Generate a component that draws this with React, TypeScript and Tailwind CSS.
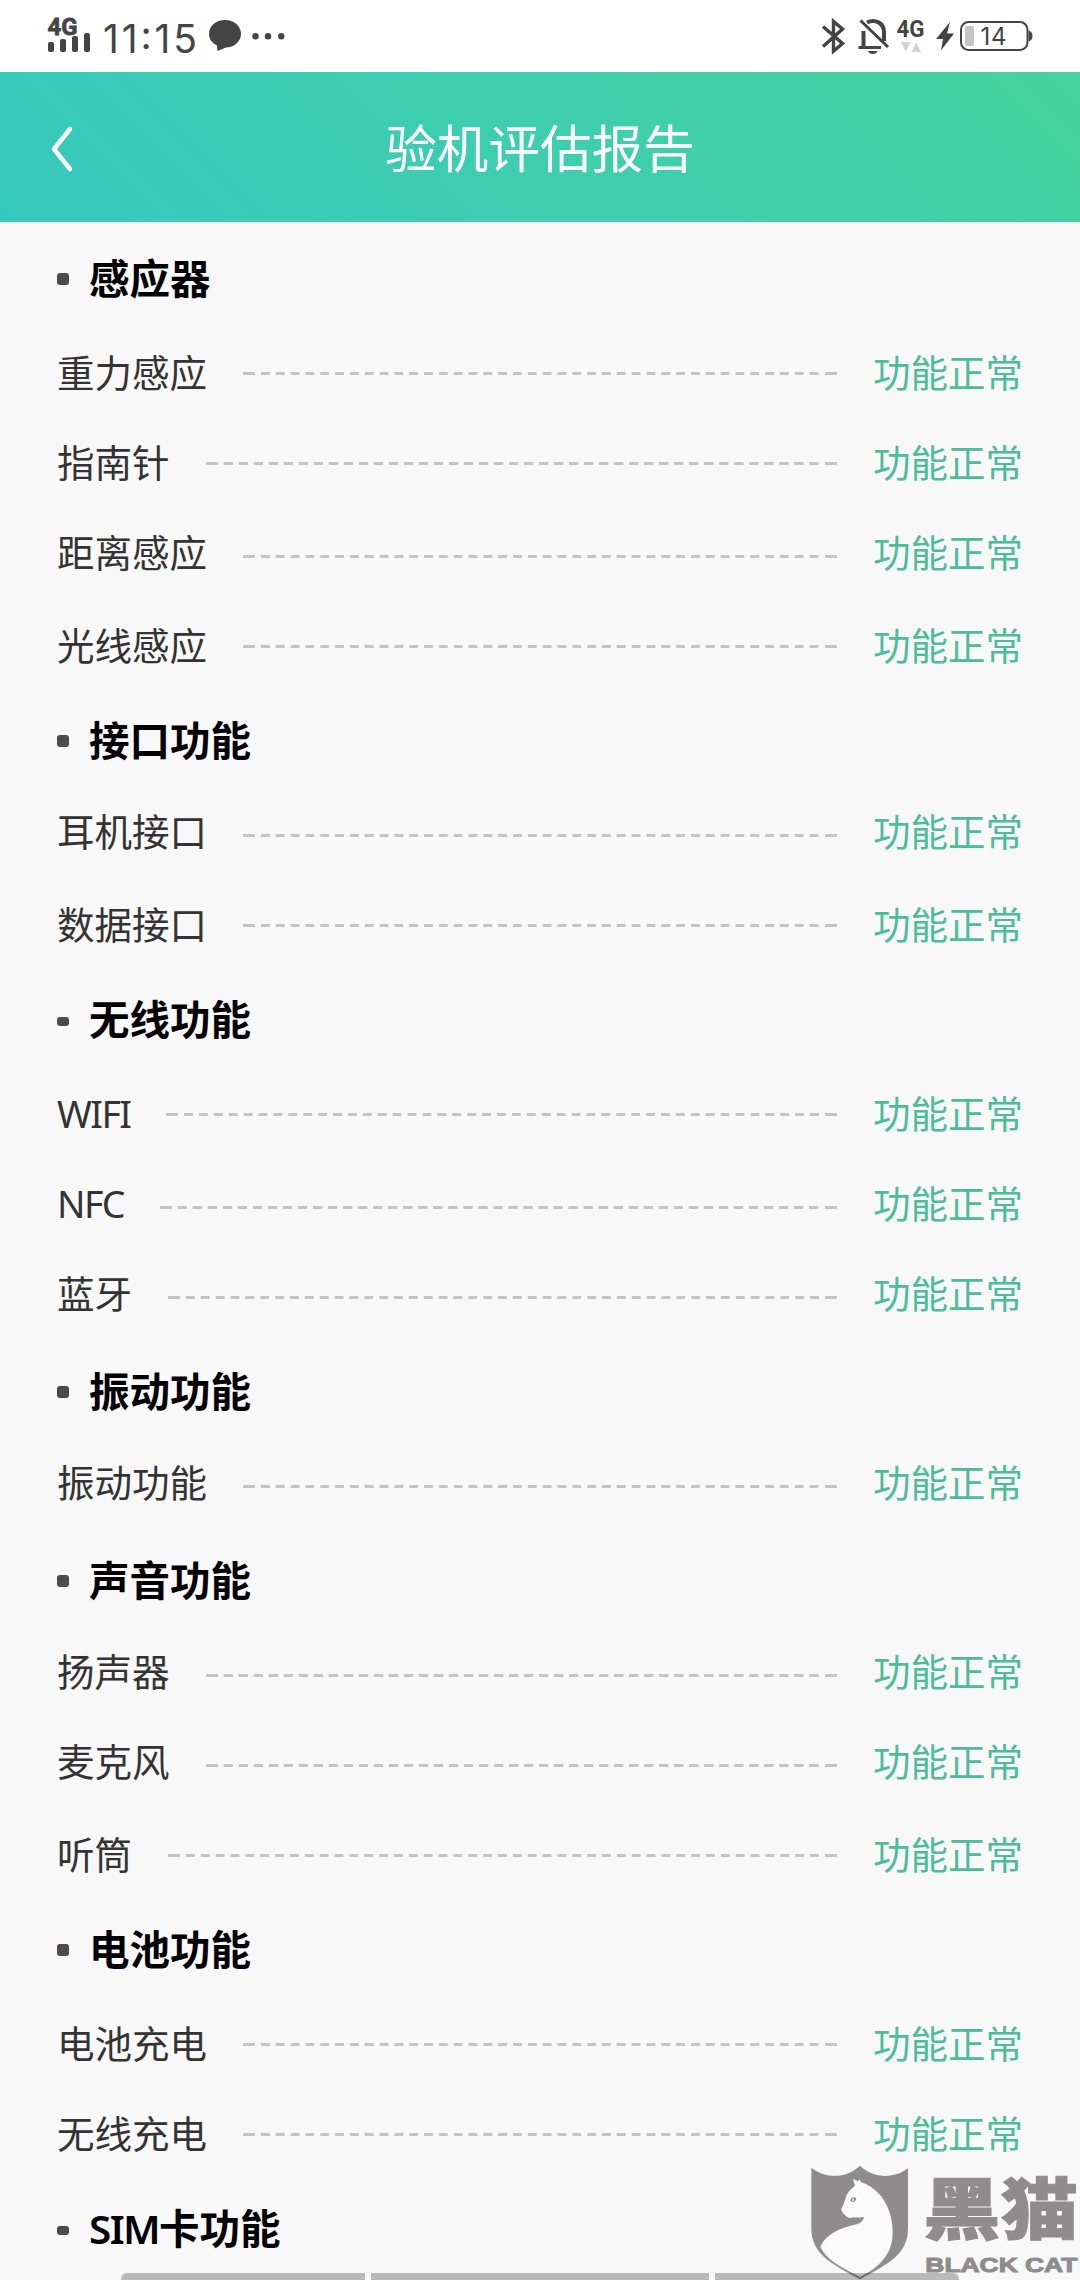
import React from "react";
import { clsx } from "clsx";

interface CheckItem {
  label: string;
  latin?: boolean;
  raised?: boolean; // text sits slightly above the leader line
  spaced?: boolean;
}

interface CheckSection {
  prefix?: string;
  title: string;
  flatBullet?: boolean;
  items: CheckItem[];
}

const sections: CheckSection[] = [
  {
    title: "感应器",
    items: [
      { label: "重力感应" },
      { label: "指南针" },
      { label: "距离感应", raised: true, spaced: true },
      { label: "光线感应" },
    ],
  },
  {
    title: "接口功能",
    items: [{ label: "耳机接口", raised: true }, { label: "数据接口" }],
  },
  {
    title: "无线功能",
    flatBullet: true,
    items: [
      { label: "WIFI", latin: true },
      { label: "NFC", latin: true, raised: true, spaced: true },
      { label: "蓝牙", raised: true },
    ],
  },
  {
    title: "振动功能",
    items: [{ label: "振动功能", raised: true }],
  },
  {
    title: "声音功能",
    items: [
      { label: "扬声器", raised: true },
      { label: "麦克风", raised: true },
      { label: "听筒" },
    ],
  },
  {
    title: "电池功能",
    items: [{ label: "电池充电" }, { label: "无线充电" }],
  },
  { prefix: "SIM", title: "卡功能", flatBullet: true, items: [] },
];

function StatusBar() {
  return (
    <div className="flex h-[72px] items-center justify-between bg-white text-[#444]">
      <svg width="300" height="72" viewBox="0 0 300 72" fill="currentColor">
        <text x="47.5" y="34.5" textLength="30" lengthAdjust="spacingAndGlyphs" stroke="currentColor" strokeWidth="0.8" className="font-['Roboto',sans-serif] text-[24px] font-bold">
          4G
        </text>
        <rect x="48" y="42" width="6" height="10" rx="2" />
        <rect x="60" y="39" width="6" height="13" rx="2" />
        <rect x="72" y="36" width="6" height="16" rx="2" />
        <rect x="84" y="33" width="6" height="19" rx="2" />
        <text x="103" y="52.5" textLength="94" className="font-['Inter',sans-serif] text-[39px]">
          11:15
        </text>
        <path d="M225 20c9 0 16 6 16 14 0 7.500-7 13.500-15 13.500L217.500 51l-.5-5.500c-5-2.500-8-6.500-8-11.500 0-8 7-14 16-14z" />
        <circle cx="255.500" cy="36.300" r="3.200" />
        <circle cx="268" cy="36.300" r="3.200" />
        <circle cx="281.300" cy="36.300" r="3.200" />
      </svg>

      <svg width="300" height="72" viewBox="0 0 300 72" fill="none" stroke="currentColor">
        {/* bluetooth */}
        <path d="M43 26.500L62.500 43.500L53.500 51V21.500L62.500 29L43 46.500" strokeWidth="3.400" />
        {/* muted bell */}
        <path d="M83.500 46V31M87 22.500c8-4 17 .5 17 9.500v9" strokeWidth="4" />
        <path d="M78.500 47.500H101M80.500 20.500L108 47" strokeWidth="3" />
        <path d="M88 51h9.500c-1 4-8.500 4-9.500 0z" fill="currentColor" stroke="none" />
        <text x="116.500" y="37" textLength="28" lengthAdjust="spacingAndGlyphs" fill="currentColor" stroke="none" className="font-['Roboto',sans-serif] text-[24px] font-bold">
          4G
        </text>
        <path d="M121 42h9.500l-4.750 9.500zM131.500 52h9.500l-4.750-9.500z" fill="#d2d2d2" stroke="none" />
        {/* charging battery */}
        <path d="M170 22l-14 17h7l-2 11.500 13-17h-7z" fill="currentColor" stroke="none" />
        <rect x="181" y="22" width="66.500" height="28" rx="7.500" strokeWidth="2" />
        <rect x="185" y="26" width="9" height="20" rx="2" fill="#c4c4c4" stroke="none" />
        <path d="M249 31c4 1 4 9 0 10z" fill="currentColor" />
        <text x="200.500" y="45" textLength="26" fill="currentColor" stroke="none" className="font-['Inter',sans-serif] text-[24px]">
          14
        </text>
      </svg>
    </div>
  );
}

function Header() {
  return (
    <header className="grid h-[150px] grid-cols-[120px_1fr_120px] items-center bg-[linear-gradient(45deg,#35c8be,#47d39f)] text-white">
      <svg className="mt-[3px] ml-12" width="30" height="48" viewBox="0 0 30 48" fill="none" stroke="currentColor" strokeWidth="4.500" strokeLinecap="round" strokeLinejoin="round">
        <path d="M22 4L6 24L22 44" />
      </svg>
      <h1 className="pt-0.5 text-center text-[51.6px] leading-[72px]">验机评估报告</h1>
    </header>
  );
}

function Leader() {
  return (
    <div className="mx-9 flex h-[3px] flex-1">
      <span className="w-3 bg-[#c4c4c4]" />
      <span className="mr-1.5 flex-1 bg-[linear-gradient(90deg,transparent_40%,#c4c4c4_40%)] [background-repeat:round] [background-size:15px_3px]" />
      <span className="w-3 bg-[#c4c4c4]" />
    </div>
  );
}

function CheckRow({ label, latin, raised, spaced }: CheckItem) {
  return (
    <div className={clsx("flex h-[90px] items-center text-[37.5px] leading-[54px]", spaced && "mt-[3px]")}>
      <span className={clsx("text-[#333]", latin && "tracking-[-1.6px]", raised ? "pb-2" : "pb-0.5")}>{label}</span>
      <Leader />
      <span className={clsx("text-[#4cbc9a]", raised ? "pb-2" : "pb-0.5")}>功能正常</span>
    </div>
  );
}

function Section({ prefix, title, flatBullet, items }: CheckSection) {
  return (
    <section>
      <div className="flex h-[99px] items-center gap-5">
        <span className={clsx("w-3 rounded-[3px] bg-[#4d4a4b]", flatBullet ? "mt-[3px] h-[9px]" : "h-3")} />
        <h2 className="text-[40.5px] leading-[60px] font-bold text-black">
          {prefix && <span className="font-semibold tracking-[-1.6px]">{prefix}</span>}
          {title}
        </h2>
      </div>
      {items.map((item) => (
        <CheckRow key={item.label} {...item} />
      ))}
    </section>
  );
}

function Watermark() {
  return (
    <svg className="absolute right-0 bottom-0" width="300" height="160" viewBox="0 0 900 480" fill="#8e8c8d">
      <path d="M94 143C140 178 200 175 240 137C280 175 340 178 384 145V325C384 400 330 430 240 478C150 430 94 400 94 325Z" />
      {/* cat */}
      <path
        d="M219 176L233 184L239 178L244 187C300 205 338 265 338 335C338 395 310 435 240 471C180 440 140 420 121 380C140 340 180 325 230 313C243 309 250 302 252 291C235 294 222 291 209 294C198 290 184 278 184 266C194 250 194 238 200 225C205 212 216 205 225 197Z"
        fill="#fafafa"
      />
      <path d="M210 241C215 230 222 230 229 235C228 243 222 247 216 246Z" />
      <path d="M215 241L221 233L222 243Z" fill="#fafafa" />
      <text x="430" y="341" textLength="464" lengthAdjust="spacingAndGlyphs" stroke="#8e8c8d" strokeWidth="3" className="font-['Noto_Sans_CJK_SC',sans-serif] text-[200px] font-black">
        黑猫
      </text>
      <text x="436" y="456" textLength="456" lengthAdjust="spacingAndGlyphs" stroke="#8e8c8d" strokeWidth="3" className="font-['Liberation_Sans',sans-serif] text-[63px] font-bold">
        BLACK CAT
      </text>
    </svg>
  );
}

function BottomBar() {
  return (
    <div className="absolute inset-x-0 bottom-0 flex h-[7px] justify-center gap-1.5">
      <span className="w-[244px] rounded-tl-md bg-black/25" />
      <span className="w-[338px] bg-black/25" />
      <span className="w-[244px] rounded-tr-md bg-black/25" />
    </div>
  );
}

export default function App() {
  return (
    <div className="relative h-[2280px] w-[1080px] overflow-hidden bg-[#f8f8f8] font-['Noto_Sans','Noto_Sans_CJK_SC',sans-serif]">
      <StatusBar />
      <Header />
      <main className="px-[57px] pt-[7.5px]">
        {sections.map((section) => (
          <Section key={section.title} {...section} />
        ))}
      </main>
      <Watermark />
      <BottomBar />
    </div>
  );
}
